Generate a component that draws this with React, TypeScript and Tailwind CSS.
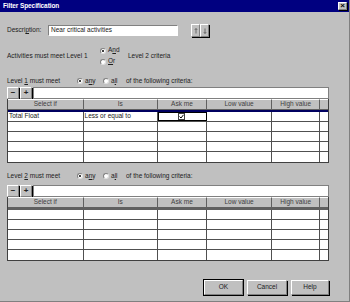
import React from 'react'

const raised =
  'bg-[#c0c0c0] border border-t-white border-l-white border-r-[#808080] border-b-[#808080] shadow-[1px_1px_0_#000]'

const Radio = ({ checked }: { checked?: boolean }) => (
  <span className="inline-flex items-center justify-center w-[6px] h-[6px] rounded-full bg-white border border-t-[#808080] border-l-[#808080] border-r-[#e0e0e0] border-b-[#e0e0e0] shrink-0">
    {checked && <span className="block w-[2px] h-[2px] rounded-full bg-black" />}
  </span>
)

const Arrow = ({ up }: { up?: boolean }) => (
  <svg width="4" height="6" viewBox="0 0 4 6">
    {up ? (
      <path d="M2 0.5 L2 5.5 M0.8 1.8 L2 0.6 L3.2 1.8" stroke="#303030" strokeWidth="0.6" fill="none" />
    ) : (
      <path d="M2 0.5 L2 5.5 M0.8 4.2 L2 5.4 L3.2 4.2" stroke="#303030" strokeWidth="0.6" fill="none" />
    )}
  </svg>
)

const Toolbar = () => (
  <div className="flex h-[12px] ml-[7px] w-[322px]">
    <button className={`${raised} w-[12px] h-[12px] flex items-center justify-center text-[8px] leading-none font-bold`}>
      −
    </button>
    <button className={`${raised} w-[12px] h-[12px] ml-[1px] flex items-center justify-center text-[8px] leading-none font-bold`}>
      +
    </button>
    <div className="flex-1 h-[12px] ml-[1px] bg-white border border-[#808080]" />
  </div>
)

const cols = ['w-[76px]', 'w-[75px]', 'w-[49px]', 'w-[66px]', 'w-[48px]', 'w-[8px]']
const headers = ['Select if', 'Is', 'Ask me', 'Low value', 'High value', '']

const Grid = ({ rows, lineColor }: { rows: string[][]; lineColor: string }) => (
  <div className="ml-[7px] w-[322px] border-l border-r border-b border-[#404040]">
    {/* header */}
    <div className="flex h-[11px] bg-[#c0c0c0]">
      {headers.map((h, i) => (
        <div
          key={i}
          className={`${cols[i]} h-[11px] flex items-center justify-center text-[#404040] border-r border-b border-[#606060] border-t border-t-white last:border-r-0`}
        >
          {h}
        </div>
      ))}
    </div>
    <div className={`h-[2px] ${lineColor}`} />
    {rows.map((r, ri) => (
      <div key={ri} className={`flex h-[10px] bg-white ${ri < rows.length - 1 ? 'border-b border-[#505050]' : ''}`}>
        {cols.map((c, ci) => (
          <div
            key={ci}
            className={`${c} flex items-center ${ci === 2 ? 'justify-center' : 'pl-[1px]'} ${ci < 5 ? 'border-r border-[#505050]' : ''} ${ri === 0 && ci === 2 && r[2] === 'x' ? 'outline outline-1 outline-black -outline-offset-1' : ''}`}
          >
            {ci === 2 && r[2] === 'x' ? (
              <span className="w-[7px] h-[7px] bg-white border border-[#404040] flex items-center justify-center">
                <svg width="5" height="5" viewBox="0 0 5 5">
                  <path d="M0.5 2.5 L2 4 L4.5 0.8" stroke="#000" strokeWidth="1" fill="none" />
                </svg>
              </span>
            ) : (
              <span className="text-[#202020] whitespace-nowrap">{r[ci] || ''}</span>
            )}
          </div>
        ))}
      </div>
    ))}
  </div>
)

export default function App() {
  const empty = ['', '', '', '', '', '']
  const rows1 = [['Total Float', 'Less or equal to', 'x', '', '', ''], empty, empty, empty, empty]
  const rows2 = [empty, empty, empty, empty, empty]

  return (
    <div
      className="w-[350px] h-[302px] bg-[#c0c0c0] flex flex-col overflow-hidden text-[6.5px] leading-none text-[#202020] border-r border-b border-[#808080]"
      style={{ fontFamily: '"Liberation Sans", Arial, sans-serif' }}
    >
      {/* title bar */}
      <div className="h-[12px] bg-[#000080] flex items-center justify-between pl-[3px] pr-[2px]">
        <span className="text-white font-bold text-[6.5px] tracking-[-0.1px]">Filter Specification</span>
        <span className={`${raised} w-[9px] h-[8px] flex items-center justify-center text-[8px] font-bold text-black leading-none`}>
          ×
        </span>
      </div>

      {/* description */}
      <div className="mt-[12px] h-[13px] flex items-center pl-[7px]">
        <span className="w-[41px]">
          Descri<span className="underline">p</span>tion:
        </span>
        <div className="w-[130px] h-[11px] bg-white border border-t-[#808080] border-l-[#808080] border-r-white border-b-white flex items-center pl-[2px]">
          Near critical activities
        </div>
        <div className="ml-[13px] flex">
          <button className={`${raised} w-[9px] h-[13px] flex items-center justify-center`}>
            <Arrow up />
          </button>
          <button className={`${raised} w-[9px] h-[13px] flex items-center justify-center`}>
            <Arrow />
          </button>
        </div>
      </div>

      {/* activities must meet */}
      <div className="mt-[8px] h-[22px] flex items-center pl-[7px]">
        <span className="w-[93px]">Activities must meet Level 1</span>
        <div className="w-[28px] flex flex-col">
          <div className="h-[11px] flex items-center gap-[2px]">
            <Radio checked />
            <span>
              A<span className="underline">n</span>d
            </span>
          </div>
          <div className="h-[11px] flex items-center gap-[2px]">
            <Radio />
            <span>
              <span className="underline">O</span>r
            </span>
          </div>
        </div>
        <span>Level 2 criteria</span>
      </div>

      {/* level 1 */}
      <div className="mt-[9px] h-[10px] flex items-center pl-[7px]">
        <span className="w-[70px]">
          Level <span className="underline">1</span> must meet
        </span>
        <div className="w-[26px] flex items-center gap-[2px]">
          <Radio checked />
          <span>
            a<span className="underline">n</span>y
          </span>
        </div>
        <div className="w-[23px] flex items-center gap-[2px]">
          <Radio />
          <span>
            a<span className="underline">l</span>l
          </span>
        </div>
        <span>of the following criteria:</span>
      </div>

      <div className="mt-[1px]">
        <Toolbar />
      </div>
      <Grid rows={rows1} lineColor="bg-[#000060]" />

      {/* level 2 */}
      <div className="mt-[8px] h-[10px] flex items-center pl-[7px]">
        <span className="w-[70px]">
          Level <span className="underline">2</span> must meet
        </span>
        <div className="w-[26px] flex items-center gap-[2px]">
          <Radio checked />
          <span>
            a<span className="underline">n</span>y
          </span>
        </div>
        <div className="w-[23px] flex items-center gap-[2px]">
          <Radio />
          <span>
            a<span className="underline">l</span>l
          </span>
        </div>
        <span>of the following criteria:</span>
      </div>

      <div className="mt-[4px]">
        <Toolbar />
      </div>
      <Grid rows={rows2} lineColor="bg-[#606060]" />

      {/* buttons */}
      <div className="mt-[19px] flex pl-[204px] gap-[4px]">
        <button className={`${raised} w-[39px] h-[15px] flex items-center justify-center outline outline-1 outline-black`}>OK</button>
        <button className={`${raised} w-[40px] h-[15px] flex items-center justify-center`}>Cancel</button>
        <button className={`${raised} w-[38px] h-[15px] flex items-center justify-center`}>Help</button>
      </div>
    </div>
  )
}
